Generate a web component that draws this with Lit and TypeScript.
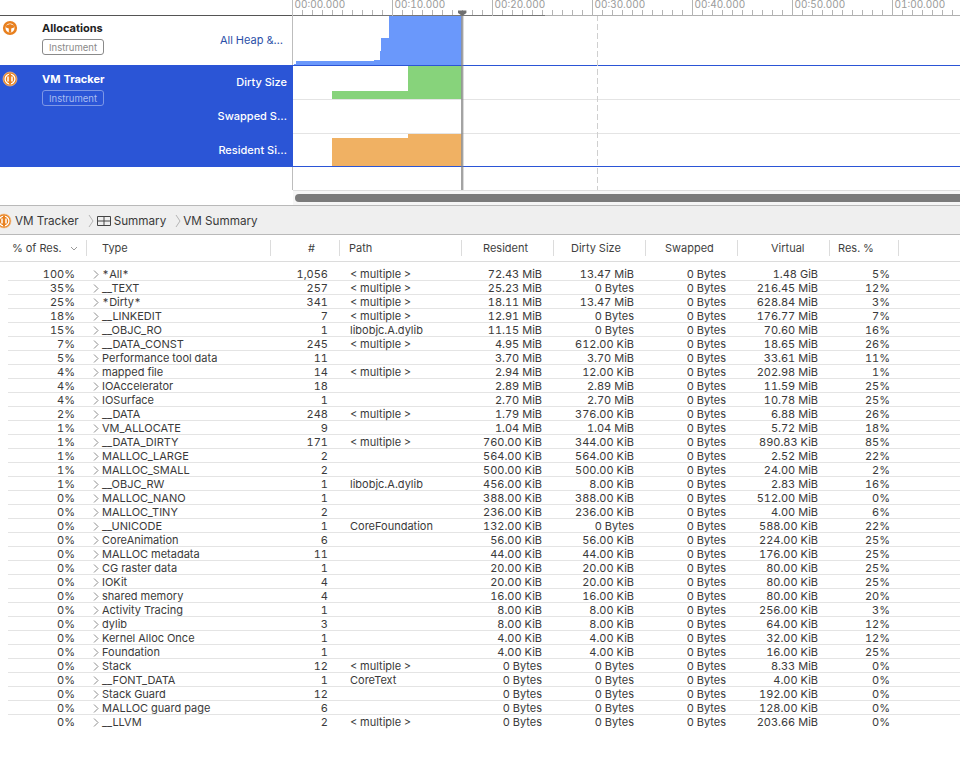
import { LitElement, html, css, svg } from "lit";
import { customElement } from "lit/decorators.js";

const M = "< multiple >";
type R = [string, string, string, string, string, string, string, string, string];
const rows: R[] = [
  ["100%", "*All*", "1,056", M, "72.43 MiB", "13.47 MiB", "0 Bytes", "1.48 GiB", "5%"],
  ["35%", "__TEXT", "257", M, "25.23 MiB", "0 Bytes", "0 Bytes", "216.45 MiB", "12%"],
  ["25%", "*Dirty*", "341", M, "18.11 MiB", "13.47 MiB", "0 Bytes", "628.84 MiB", "3%"],
  ["18%", "__LINKEDIT", "7", M, "12.91 MiB", "0 Bytes", "0 Bytes", "176.77 MiB", "7%"],
  ["15%", "__OBJC_RO", "1", "libobjc.A.dylib", "11.15 MiB", "0 Bytes", "0 Bytes", "70.60 MiB", "16%"],
  ["7%", "__DATA_CONST", "245", M, "4.95 MiB", "612.00 KiB", "0 Bytes", "18.65 MiB", "26%"],
  ["5%", "Performance tool data", "11", "", "3.70 MiB", "3.70 MiB", "0 Bytes", "33.61 MiB", "11%"],
  ["4%", "mapped file", "14", M, "2.94 MiB", "12.00 KiB", "0 Bytes", "202.98 MiB", "1%"],
  ["4%", "IOAccelerator", "18", "", "2.89 MiB", "2.89 MiB", "0 Bytes", "11.59 MiB", "25%"],
  ["4%", "IOSurface", "1", "", "2.70 MiB", "2.70 MiB", "0 Bytes", "10.78 MiB", "25%"],
  ["2%", "__DATA", "248", M, "1.79 MiB", "376.00 KiB", "0 Bytes", "6.88 MiB", "26%"],
  ["1%", "VM_ALLOCATE", "9", "", "1.04 MiB", "1.04 MiB", "0 Bytes", "5.72 MiB", "18%"],
  ["1%", "__DATA_DIRTY", "171", M, "760.00 KiB", "344.00 KiB", "0 Bytes", "890.83 KiB", "85%"],
  ["1%", "MALLOC_LARGE", "2", "", "564.00 KiB", "564.00 KiB", "0 Bytes", "2.52 MiB", "22%"],
  ["1%", "MALLOC_SMALL", "2", "", "500.00 KiB", "500.00 KiB", "0 Bytes", "24.00 MiB", "2%"],
  ["1%", "__OBJC_RW", "1", "libobjc.A.dylib", "456.00 KiB", "8.00 KiB", "0 Bytes", "2.83 MiB", "16%"],
  ["0%", "MALLOC_NANO", "1", "", "388.00 KiB", "388.00 KiB", "0 Bytes", "512.00 MiB", "0%"],
  ["0%", "MALLOC_TINY", "2", "", "236.00 KiB", "236.00 KiB", "0 Bytes", "4.00 MiB", "6%"],
  ["0%", "__UNICODE", "1", "CoreFoundation", "132.00 KiB", "0 Bytes", "0 Bytes", "588.00 KiB", "22%"],
  ["0%", "CoreAnimation", "6", "", "56.00 KiB", "56.00 KiB", "0 Bytes", "224.00 KiB", "25%"],
  ["0%", "MALLOC metadata", "11", "", "44.00 KiB", "44.00 KiB", "0 Bytes", "176.00 KiB", "25%"],
  ["0%", "CG raster data", "1", "", "20.00 KiB", "20.00 KiB", "0 Bytes", "80.00 KiB", "25%"],
  ["0%", "IOKit", "4", "", "20.00 KiB", "20.00 KiB", "0 Bytes", "80.00 KiB", "25%"],
  ["0%", "shared memory", "4", "", "16.00 KiB", "16.00 KiB", "0 Bytes", "80.00 KiB", "20%"],
  ["0%", "Activity Tracing", "1", "", "8.00 KiB", "8.00 KiB", "0 Bytes", "256.00 KiB", "3%"],
  ["0%", "dylib", "3", "", "8.00 KiB", "8.00 KiB", "0 Bytes", "64.00 KiB", "12%"],
  ["0%", "Kernel Alloc Once", "1", "", "4.00 KiB", "4.00 KiB", "0 Bytes", "32.00 KiB", "12%"],
  ["0%", "Foundation", "1", "", "4.00 KiB", "4.00 KiB", "0 Bytes", "16.00 KiB", "25%"],
  ["0%", "Stack", "12", M, "0 Bytes", "0 Bytes", "0 Bytes", "8.33 MiB", "0%"],
  ["0%", "__FONT_DATA", "1", "CoreText", "0 Bytes", "0 Bytes", "0 Bytes", "4.00 KiB", "0%"],
  ["0%", "Stack Guard", "12", "", "0 Bytes", "0 Bytes", "0 Bytes", "192.00 KiB", "0%"],
  ["0%", "MALLOC guard page", "6", "", "0 Bytes", "0 Bytes", "0 Bytes", "128.00 KiB", "0%"],
  ["0%", "__LLVM", "2", M, "0 Bytes", "0 Bytes", "0 Bytes", "203.66 MiB", "0%"],
];

const headers: [string, string][] = [
  ["% of Res.", "c1"], ["Type", "c2"], ["#", "c3"], ["Path", "c4"], ["Resident", "c5"],
  ["Dirty Size", "c6"], ["Swapped", "c7"], ["Virtual", "c8"], ["Res. %", "c9"],
];

const allocIcon = svg`<circle cx="8" cy="8" r="5.8" fill="#fff" stroke="#e8801f" stroke-width="2.6"/>
  <path d="M4 5.6 L8 4 L12 5.6 L12 7.6 L9.2 8.6 L9.2 12.4 L6.8 12.4 L6.8 8.6 L4 7.6 Z" fill="#e8801f"/>`;
const vmIcon = svg`<circle cx="8" cy="8" r="7" fill="#e8801f" stroke="#f3c08c" stroke-width="0.7"/>
  <circle cx="8" cy="8" r="4.9" fill="none" stroke="#fff" stroke-width="1.3"/>
  <path d="M8 2.5 V13.5" stroke="#e8801f" stroke-width="2"/>
  <path d="M6 5.6 V10.4 M10 5.6 V10.4" stroke="#fff" stroke-width="1.5"/>`;

const timeline = () => {
  const minor = [];
  for (let x = 302; x < 960; x += 10) {
    if ((x - 292) % 100 !== 0) minor.push(x - 293 + 0.5);
  }
  const majors = [0, 1, 2, 3, 4, 5, 6];
  const labels = ["00:00.000", "00:10.000", "00:20.000", "00:30.000", "00:40.000", "00:50.000", "01:00.000"];
  return svg`<svg class="tl" width="668" height="190" viewBox="-1 0 668 190">
    <path d="M1 65 V64 H3 V61 H81 V60 H87 V51 H88 V38 H96 V15 H168.5 V65 Z" fill="#6a98fb"/>
    <path d="M39 99 V91 H115 V66 H168.5 V99 Z" fill="#87d37b"/>
    <path d="M39 166 V138 H115 V134 H168.5 V166 Z" fill="#f0b163"/>
    <path d="M0 99.5 H667 M0 133.5 H667" stroke="#e4e4e4" stroke-width="1"/>
    <path d="M0 65.5 H667 M0 166.5 H667" stroke="#2b55d6" stroke-width="1"/>
    <path d="M304.5 15 V190" stroke="#cfcfcf" stroke-width="1" stroke-dasharray="6 3"/>
    <path d="M0 15.5 H252" stroke="#777" stroke-width="1"/>
    <path d="M252 15.5 H667" stroke="#b0b0b0" stroke-width="1"/>
    ${minor.map((x) => svg`<path d="M${x} 10 V15" stroke="#b4b4b4" stroke-width="1"/>`)}
    ${majors.map((i) => svg`${i > 0 ? svg`<path d="M${i * 100 - 0.5} 0 V16" stroke="#b4b4b4" stroke-width="1"/>` : ""}
      <text x="${i * 100 + 1.5}" y="7.5" class="tick">${labels[i]}</text>`)}
    <rect x="-1" y="0" width="1" height="190" fill="#bdbdbd"/>
    <rect x="-1" y="65" width="1" height="102" fill="#2b55d6"/>
    <rect x="168" y="15" width="2.4" height="175" fill="#7f7f7f" fill-opacity="0.72"/>
    <path d="M165 10.5 H173.4 V13 L169.2 16 L165 13 Z" fill="#6f6f6f"/>
  </svg>`;
};

@customElement("app-root")
export class AppRoot extends LitElement {
  static styles = css`
    :host {
      display: block;
      width: 960px;
      height: 764px;
      overflow: hidden;
      background: #fff;
      font-family: Inter, "Liberation Sans", sans-serif;
      font-size: 11px;
      color: #3a3a3a;
      font-variant-numeric: tabular-nums;
    }
    .top { display: grid; grid-template-columns: 292px 668px; height: 190px; }
    .side { display: flex; flex-direction: column; }
    .spacer { height: 15px; border-bottom: 1px solid #555; flex: none; }
    .track { display: grid; grid-template-columns: 42px 1fr auto; }
    .track.a { height: 49px; }
    .track.b { height: 102px; background: #2b55d6; color: #fff; }
    .icon { padding: 4px 0 0 2px; }
    .b .icon { padding-top: 6px; }
    .icon svg { display: block; }
    .name { font-weight: 700; color: #222; line-height: 14px; padding-top: 5px; }
    .b .name { color: #fff; padding-top: 7px; }
    .badge {
      display: flex; align-items: center; justify-content: center;
      width: 62px; height: 16px; box-sizing: border-box; margin-top: 4px;
      border: 1px solid #8a8a8a; border-radius: 3px; font-size: 9.5px; color: #8a8a8a;
    }
    .b .badge { border-color: #7d97e6; color: #a9bcf0; }
    .labels { display: flex; flex-direction: column; align-items: flex-end; line-height: 14px; }
    .a .labels { padding: 17px 9px 0 0; color: #2b4fa8; }
    .b .labels { font-weight: 500; padding: 10px 5px 0 0; gap: 20px; color: #fff; }
    .tl { display: block; overflow: hidden; }
    .tick { font-size: 10px; fill: #9a9a9a; font-family: Inter, "Liberation Sans", sans-serif; }
    .scroll { display: grid; grid-template-columns: 293px 667px; height: 15px; }
    .strack {
      background: #f6f6f6; border-top: 1px solid #dedede; box-sizing: border-box;
      padding: 3px 0 0 2px;
    }
    .thumb { height: 8px; background: #7b7b7b; border-radius: 4px 0 0 4px; }
    .crumbs {
      height: 27px; padding-top: 1px;
      border-top: 1px solid #b9b9b9; border-bottom: 1px solid #b9b9b9;
      background: #efefef; display: flex; align-items: center; font-size: 11.7px; color: #3a3a3a;
      overflow: hidden;
    }
    .crumbs svg { flex: none; }
    .ci { margin: 0 3px 0 -4px; }
    .sep { margin: 0 3px 0 9px; }
    .tb { margin-right: 3px; }
    .sep2 { margin: 0 2px 0 9px; }
    .grid { display: grid; }
    .head { grid-template-columns: 87px 184px 69px 122px 92px 92px 92px 92px 69px 61px; height: 26px; border-bottom: 1px solid #dcdcdc; align-items: center; }
    .h { height: 16px; display: flex; align-items: center; border-right: 1px solid #dcdcdc; box-sizing: border-box; color: #3f3f3f; }
    .h.c1 { padding-left: 12px; }
    .h.c2 { padding-left: 15px; }
    .h.c3 { justify-content: flex-end; padding-right: 24px; }
    .h.c4 { padding-left: 9px; }
    .h.c5 { padding-left: 21px; }
    .h.c6 { padding-left: 17px; }
    .h.c7 { padding-left: 19px; }
    .h.c8 { padding-left: 33px; }
    .h.c9 { padding-left: 8px; }
    .sort { margin-left: 9px; }
    .body { padding-top: 5px; }
    .row { height: 14px; padding-top: 1px; line-height: 13px; border-bottom: 1px solid #e4e4e4; box-sizing: border-box; margin-left: 8px; grid-template-columns: 79px 183px 69px 122px 92px 92px 92px 92px 69px 54px; white-space: nowrap; }
    .row:last-child { border-bottom: 0; }
    .r { text-align: right; }
    .p0 { padding-right: 12px; }
    .p1 { padding-right: 11px; }
    .p9 { padding-right: 8px; }
    .type { display: flex; align-items: center; padding-left: 6px; gap: 3px; }
    .type svg { flex: none; }
    .path { padding-left: 11px; }
  `;

  render() {
    return html`
      <div class="top">
        <div class="side">
          <div class="spacer"></div>
          <div class="track a">
            <div class="icon"><svg width="16" height="16" viewBox="0 0 16 16">${allocIcon}</svg></div>
            <div>
              <div class="name">Allocations</div>
              <div class="badge">Instrument</div>
            </div>
            <div class="labels">All Heap &…</div>
          </div>
          <div class="track b">
            <div class="icon"><svg width="16" height="16" viewBox="0 0 16 16">${vmIcon}</svg></div>
            <div>
              <div class="name">VM Tracker</div>
              <div class="badge">Instrument</div>
            </div>
            <div class="labels">
              <span>Dirty Size</span><span>Swapped S…</span><span>Resident Si…</span>
            </div>
          </div>
        </div>
        ${timeline()}
      </div>
      <div class="scroll">
        <div></div>
        <div class="strack"><div class="thumb"></div></div>
      </div>
      <div class="crumbs">
        <svg class="ci" width="16" height="16" viewBox="0 0 16 16">${vmIcon}</svg>
        <span>VM Tracker</span>
        <svg class="sep" width="6" height="14" viewBox="0 0 6 14"><path d="M1 1 L5 7 L1 13" fill="none" stroke="#b5b5b5"/></svg>
        <svg class="tb" width="14" height="10" viewBox="0 0 14 10"><path d="M.5.5 H13.5 V9.5 H.5 Z M.5 5 H13.5 M7 .5 V9.5" fill="none" stroke="#444" stroke-width="1"/></svg>
        <span>Summary</span>
        <svg class="sep2" width="6" height="14" viewBox="0 0 6 14"><path d="M1 1 L5 7 L1 13" fill="none" stroke="#b5b5b5"/></svg>
        <span>VM Summary</span>
      </div>
      <div class="grid head">
        ${headers.map(([t, c], i) => html`<div class="h ${c}">${t}${i === 0
          ? html`<svg class="sort" width="8" height="5" viewBox="0 0 8 5"><path d="M1 1 L4 4 L7 1" fill="none" stroke="#9a9a9a"/></svg>`
          : ""}</div>`)}
      </div>
      <div class="body">
        ${rows.map((r) => html`<div class="grid row">
          <div class="r p0">${r[0]}</div>
          <div class="type"><svg width="6" height="9" viewBox="0 0 6 9"><path d="M1 .5 L5 4.5 L1 8.5" fill="none" stroke="#8c8c8c"/></svg><span>${r[1]}</span></div>
          <div class="r p1">${r[2]}</div>
          <div class="path">${r[3]}</div>
          <div class="r p1">${r[4]}</div>
          <div class="r p1">${r[5]}</div>
          <div class="r p1">${r[6]}</div>
          <div class="r p1">${r[7]}</div>
          <div class="r p9">${r[8]}</div>
          <div></div>
        </div>`)}
      </div>
    `;
  }
}
